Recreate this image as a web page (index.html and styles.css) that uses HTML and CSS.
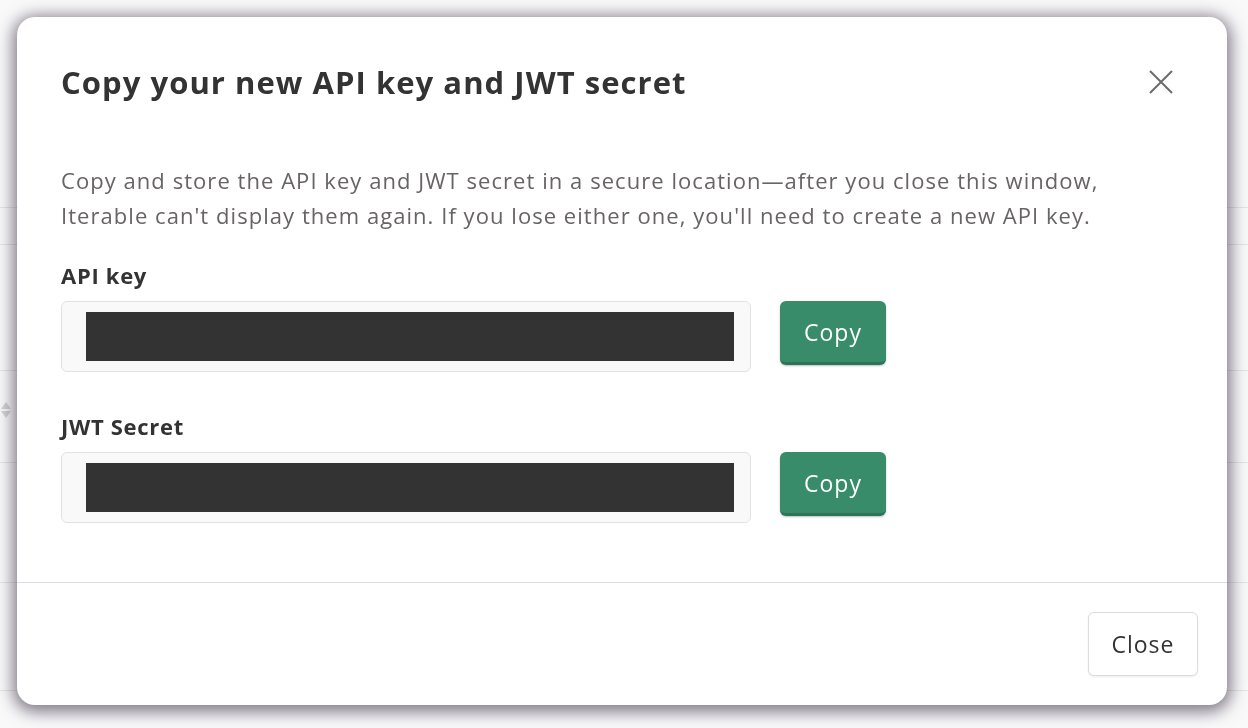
FILE: index.html
```html
<!DOCTYPE html>
<html lang="en">
<head>
<meta charset="utf-8">
<title>Copy your new API key and JWT secret</title>
<link rel="stylesheet" href="styles.css">
</head>
<body>
<div class="page">
  <div class="row h207"></div>
  <div class="row h37"></div>
  <div class="row h126"></div>
  <div class="row h92"><svg class="sort" width="12" height="18" viewBox="0 0 12 18"><path d="M6 1 L11 8 L1 8 Z M6 17 L11 10 L1 10 Z" fill="#d2d2d5"/></svg></div>
  <div class="row h120"></div>
  <div class="row h108"></div>
</div>

<div class="modal">
  <div class="modal-head">
    <h2 class="title">Copy your new API key and JWT secret</h2>
    <button class="x-btn" aria-label="Close">
      <svg width="24" height="24" viewBox="0 0 24 24"><path d="M1 1 L23 23 M23 1 L1 23" stroke="#6e6b6f" stroke-width="2" fill="none"/></svg>
    </button>
  </div>
  <div class="modal-body">
    <p class="intro">Copy and store the API key and JWT secret in a secure location—after you close this window,<br>Iterable can't display them again. If you lose either one, you'll need to create a new API key.</p>
    <div class="field">
      <div class="label">API key</div>
      <div class="field-row">
        <div class="input"><div class="mask"></div></div>
        <button class="copy">Copy</button>
      </div>
    </div>
    <div class="field second">
      <div class="label">JWT Secret</div>
      <div class="field-row">
        <div class="input"><div class="mask"></div></div>
        <button class="copy">Copy</button>
      </div>
    </div>
  </div>
  <div class="modal-foot">
    <button class="close-btn">Close</button>
  </div>
</div>
</body>
</html>
```
FILE: styles.css
```css
html, body {
  margin: 0;
  padding: 0;
}
body {
  width: 1248px;
  height: 728px;
  overflow: hidden;
  background: #f9f9fa;
  font-family: "Open Sans", "Lato", sans-serif;
  color: #333;
}
.page {
  display: flex;
  flex-direction: column;
}
.row {
  border-bottom: 1px solid #e4e4e6;
  box-sizing: border-box;
  position: relative;
}
.h207 { height: 208px; }
.h37 { height: 37px; }
.h126 { height: 126px; }
.h92 { height: 92px; }
.h120 { height: 120px; }
.h108 { height: 108px; }
.sort {
  position: absolute;
  left: 0;
  top: 30px;
}
.modal {
  position: fixed;
  left: 17px;
  top: 17px;
  width: 1210px;
  background: #fff;
  border-radius: 18px;
  box-shadow: 0 3px 16px 4px rgba(55, 45, 65, 0.62);
  overflow: hidden;
}
.modal-head {
  display: flex;
  justify-content: space-between;
  align-items: center;
  padding: 45px 44px 0 44px;
  height: 40px;
}
.title {
  margin: 0;
  font-size: 31px;
  line-height: 40px;
  font-weight: 700;
  color: #333;
  letter-spacing: 1.05px;
}
.x-btn {
  width: 24px;
  height: 24px;
  padding: 0;
  margin-right: 10px;
  border: none;
  background: none;
  display: flex;
}
.modal-body {
  padding: 0 44px 59px 44px;
}
.intro {
  margin: 61px 0 0 0;
  font-size: 22px;
  line-height: 35px;
  color: #676366;
  letter-spacing: 1.05px;
  white-space: nowrap;
}
.field {
  margin-top: 28px;
}
.field.second {
  margin-top: 40px;
}
.label {
  font-size: 22px;
  line-height: 28px;
  font-weight: 700;
  color: #333;
  letter-spacing: 0.7px;
  margin-bottom: 12px;
}
.field-row {
  display: flex;
  align-items: flex-start;
  gap: 29px;
}
.input {
  width: 690px;
  height: 71px;
  box-sizing: border-box;
  border: 1px solid #e2e2e4;
  border-radius: 6px;
  background: #f9f9f9;
  padding: 10px 16px 10px 24px;
}
.mask {
  height: 49px;
  background: #333333;
}
.copy {
  width: 106px;
  height: 64px;
  border: none;
  border-bottom: 3px solid #2c7556;
  border-radius: 6px;
  background: #388c69;
  color: #fff;
  font-family: inherit;
  font-size: 23px;
  letter-spacing: 1px;
  padding: 0;
  box-shadow: 0 1px 2px rgba(0, 0, 0, 0.25);
}
.modal-foot {
  border-top: 1px solid #dcdcde;
  display: flex;
  justify-content: flex-end;
  padding: 29px 29px 29px 30px;
}
.close-btn {
  width: 110px;
  height: 64px;
  border: 1px solid #dcdcde;
  border-radius: 6px;
  background: #fff;
  color: #333;
  font-family: inherit;
  font-size: 23px;
  letter-spacing: 1px;
  padding: 0;
  box-shadow: 0 1px 2px rgba(0, 0, 0, 0.08);
}
```
